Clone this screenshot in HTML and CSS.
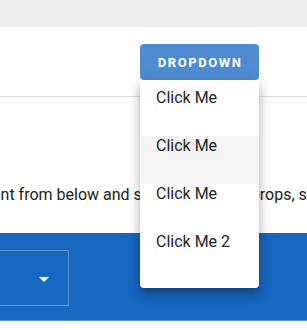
FILE: index.html
```html
<!DOCTYPE html>
<html>
<head>
<meta charset="utf-8">
<link rel="stylesheet" href="styles.css">
</head>
<body>
<div class="topbar"></div>
<div class="toolbar">
  <button class="btn">DROPDOWN</button>
</div>
<div class="content">
  <p class="desc">Select a component from below and see its available props, slots and events</p>
</div>
<div class="band">
  <div class="select">
    <svg class="caret" width="10" height="5" viewBox="0 0 10 5"><path d="M0 0 L10 0 L5 5 Z" fill="#fff"/></svg>
  </div>
</div>
<div class="menu">
  <div class="item">Click Me</div>
  <div class="item active">Click Me</div>
  <div class="item">Click Me</div>
  <div class="item">Click Me 2</div>
</div>
</body>
</html>
```
FILE: styles.css
```css
html, body {
  margin: 0;
  padding: 0;
  background: #fff;
  font-family: Roboto, "Noto Sans", sans-serif;
  overflow: hidden;
}
.topbar {
  height: 27px;
  background: #eeeeee;
}
.toolbar {
  border-bottom: 1px solid #e0e0e0;
  box-sizing: border-box;
  height: 70px;
  padding: 17px 0 0 140px;
}
.btn {
  width: 119px;
  height: 36px;
  border: none;
  border-radius: 4px;
  background: #4e8bd1;
  color: #fff;
  font-family: Roboto, sans-serif;
  font-weight: 700;
  font-size: 13px;
  letter-spacing: 0.12em;
  padding: 0;
  text-indent: 0.1em;
}
.content {
  height: 136px;
  overflow: hidden;
  white-space: nowrap;
}
.desc {
  margin: 0;
  padding-top: 88px;
  font-size: 16px;
  line-height: 20px;
  color: #222;
  text-indent: -127px;
}
.band {
  height: 88px;
  background: #1867c0;
  border-bottom: 1px solid #5c93d6;
  padding-top: 17px;
  box-sizing: border-box;
}
.select {
  width: 100px;
  height: 56px;
  margin-left: -31px;
  box-sizing: border-box;
  border: 1px solid rgba(255,255,255,0.3);
  display: flex;
  align-items: center;
  justify-content: flex-end;
  padding-right: 19px;
}
.caret {
  display: block;
  margin-top: 2px;
}
.menu {
  position: absolute;
  top: 80px;
  left: 140px;
  width: 119px;
  padding: 8px 0;
  background: #fff;
  border-radius: 0 0 4px 4px;
  box-shadow: 0 5px 5px -3px rgba(0,0,0,0.2), 0 8px 10px 1px rgba(0,0,0,0.14), 0 3px 14px 2px rgba(0,0,0,0.12);
}
.item {
  height: 48px;
  box-sizing: border-box;
  padding: 0 0 0 16px;
  font-size: 16px;
  line-height: 20px;
  color: #222;
}
.item.active {
  background: #f5f5f5;
}
```
